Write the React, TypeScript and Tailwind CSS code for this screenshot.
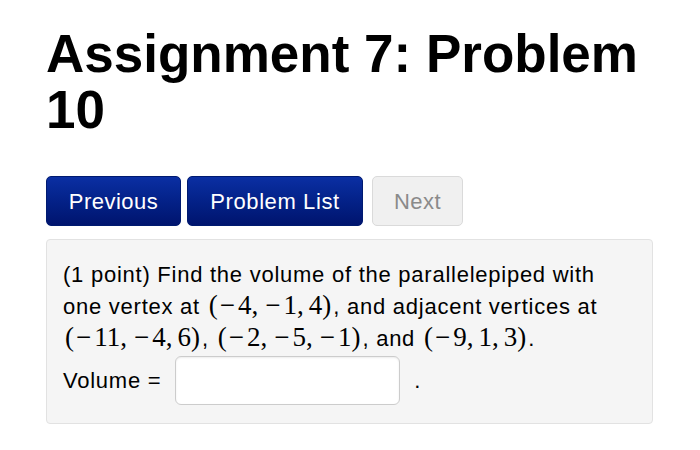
import React from "react";

// inline math in the reference is typeset with a Times-like font; minus signs get a little air
function M({ children }: { children: string }) {
  const parts = children.split("");
  return (
    <span className="mx-[2px] whitespace-nowrap font-['Liberation_Serif','Times_New_Roman',serif] text-[27px] leading-[28px] tracking-normal">
      {parts.map((ch, i) =>
        ch === "−" ? (
          <span key={i} className="pl-[2px] pr-[3px]">
            −
          </span>
        ) : ch === "," ? (
          <span key={i} className="pr-[5px]">
            ,
          </span>
        ) : (
          <span key={i}>{ch}</span>
        )
      )}
    </span>
  );
}

export default function App() {
  return (
    <div className="min-h-[450px] w-[700px] bg-white pl-[46px] pt-[26px] text-black font-['Liberation_Sans',Arial,sans-serif]">
      <h1 className="w-[620px] text-[53px] font-bold leading-[56px]">
        Assignment 7: Problem 10
      </h1>

      <div className="mt-[38px] flex">
        <button className="h-[50px] w-[135px] rounded-[5px] border border-[#001a70] bg-gradient-to-b from-[#0b2fa3] to-[#00146e] text-[22px] tracking-[0.5px] text-white">
          Previous
        </button>
        <button className="ml-[6px] h-[50px] w-[176px] rounded-[5px] border border-[#001a70] bg-gradient-to-b from-[#0b2fa3] to-[#00146e] text-[22px] tracking-[0.6px] text-white">
          Problem List
        </button>
        <button className="ml-[9px] h-[50px] w-[91px] rounded-[5px] border border-[#dadada] bg-[#f0f0f0] text-[22px] tracking-[0.5px] text-[#8a8a8a]">
          Next
        </button>
      </div>

      <div className="mt-[13px] w-[607px] rounded-[4px] border border-[#e2e2e2] bg-[#f5f5f5] pb-[18px] pl-[16px] pr-[30px] pt-[19px] text-[22px] leading-[32px] tracking-[0.75px]">
        <p>
          (1 point) Find the volume of the parallelepiped with one vertex at{" "}
          <M>(−4,−1,4)</M>, and adjacent vertices at <M>(−11,−4,6)</M>,{" "}
          <M>(−2,−5,−1)</M>, and <M>(−9,1,3)</M>.
        </p>
        <div className="mt-[1px] flex items-center">
          <span>Volume =</span>
          <input
            className="ml-[14px] h-[49px] w-[225px] rounded-[6px] border border-[#cccccc] bg-white shadow-[inset_0_1px_2px_rgba(0,0,0,0.08)] outline-none"
            aria-label="Volume"
          />
          <span className="ml-[14px]">.</span>
        </div>
      </div>
    </div>
  );
}
